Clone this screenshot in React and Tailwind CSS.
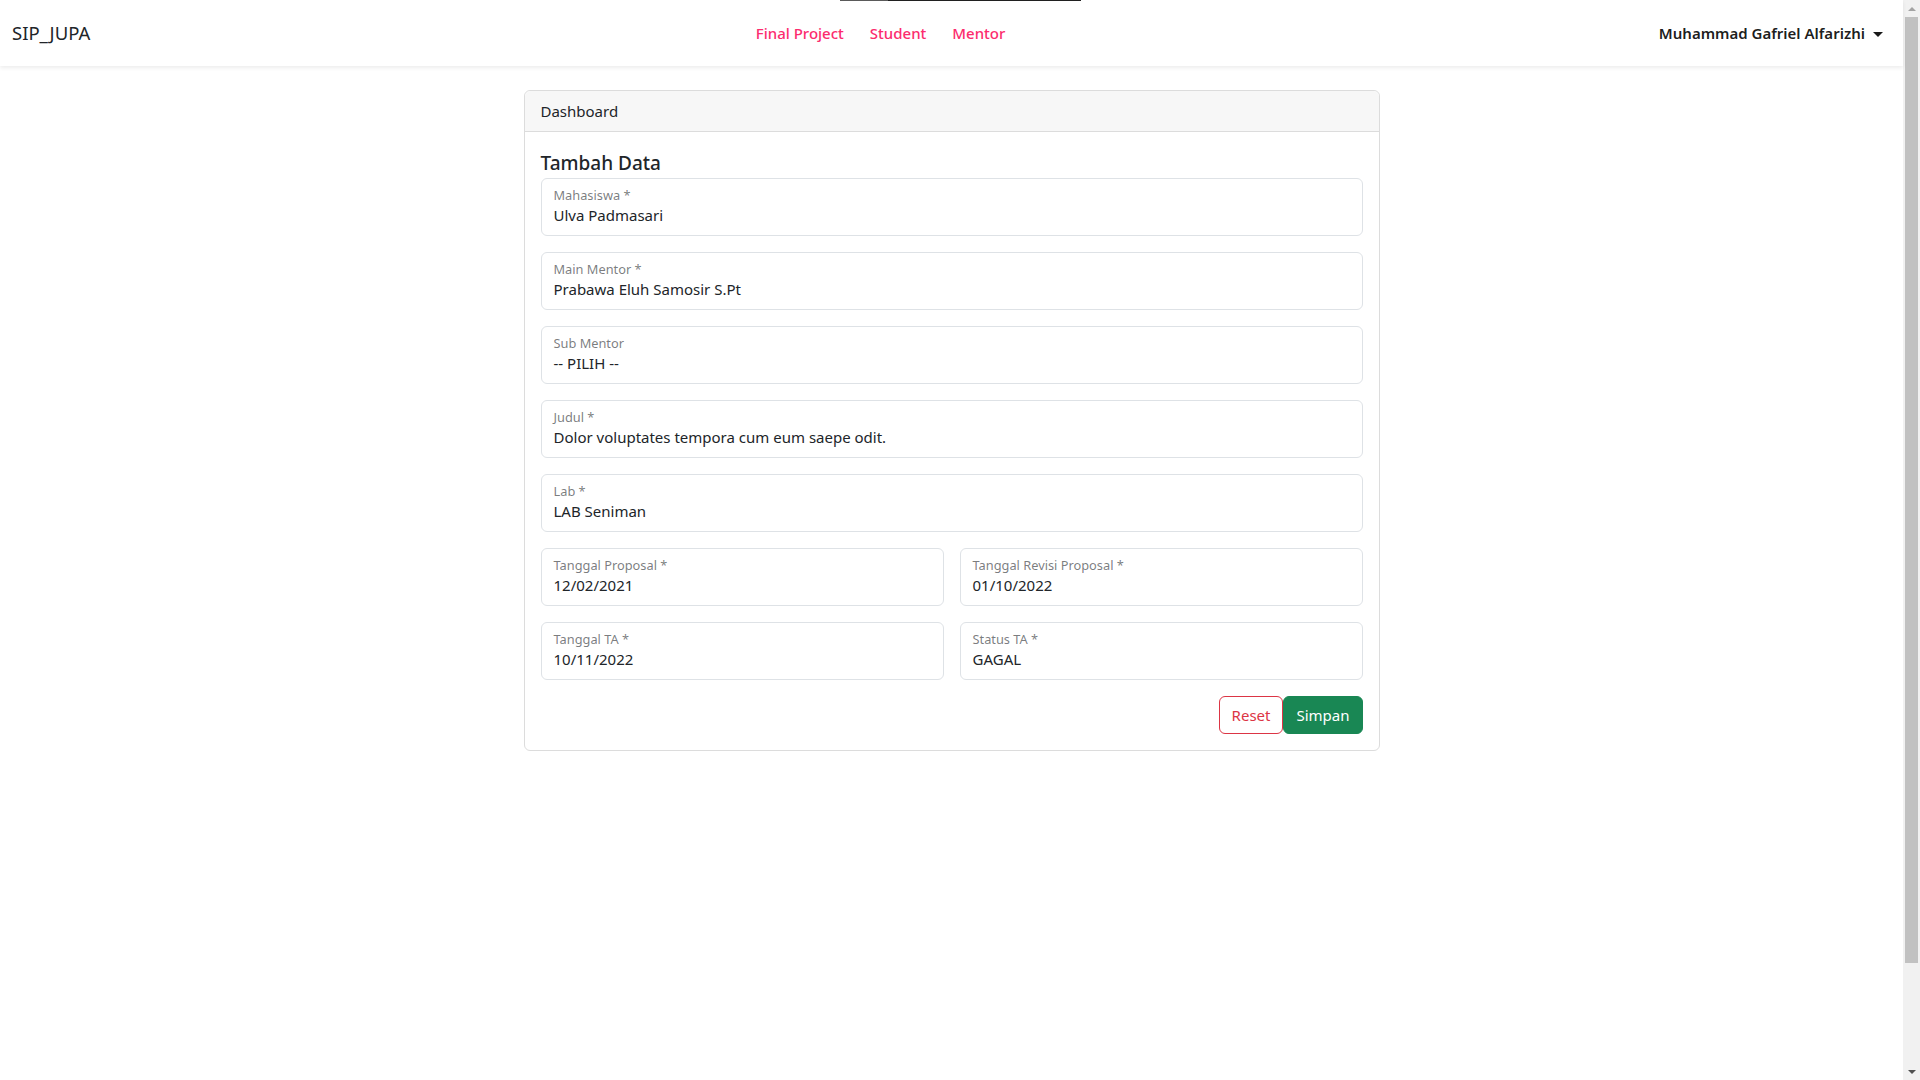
import React from 'react';

const font = { fontFamily: '"Noto Sans", "Open Sans", "Liberation Sans", sans-serif' };

function Field({ label, value }) {
  return (
    <div className="flex flex-col rounded-[6px] border border-[#dee2e6] bg-white px-3 pt-[9px] pb-[8px]">
      <span className="text-[12.8px] leading-[15px] text-[#212529]/60">{label}</span>
      <span className="text-[15px] leading-6 text-[#212529]">{value}</span>
    </div>
  );
}

function Navbar() {
  const links = ['Final Project', 'Student', 'Mentor'];

  return (
    <nav className="relative flex h-[66px] shrink-0 items-center bg-white px-3 shadow-[0_2px_4px_rgba(0,0,0,0.075)]">
      {/* thin dark strip across the top */}
      <div className="absolute left-[840px] top-0 flex h-px w-[241px]">
        <div className="w-[48px] bg-[#5a5a5a]" />
        <div className="flex-1 bg-[#202020]" />
      </div>

      <a className="mr-4 text-[18.5px] leading-[30px] text-[#212529]">SIP_JUPA</a>

      <div className="mx-auto flex items-center gap-[10px] pr-[4px]">
        {links.map(link => (
          <a key={link} className="px-2 text-[15px] font-medium text-[#fc2c6e]">
            {link}
          </a>
        ))}
      </div>

      <div className="flex items-center pr-2 text-[15px] font-semibold text-black/90">
        <span>Muhammad Gafriel Alfarizhi</span>
        <span className="ml-[8px] mt-[2px] h-0 w-0 border-x-[5px] border-t-[5px] border-x-transparent border-t-black/90" />
      </div>
    </nav>
  );
}

function Scrollbar() {
  return (
    <div className="flex h-full w-[17px] shrink-0 flex-col items-center bg-[#f1f1f1]">
      <div className="flex h-[17px] items-center justify-center">
        <span className="h-0 w-0 border-x-[4px] border-b-[4px] border-x-transparent border-b-[#a3a3a3]" />
      </div>
      <div className="w-[13px] flex-1">
        <div className="h-[946px] w-full bg-[#c1c1c1]" />
      </div>
      <div className="flex h-[17px] items-center justify-center">
        <span className="h-0 w-0 border-x-[4px] border-t-[4px] border-x-transparent border-t-[#505050]" />
      </div>
    </div>
  );
}

export default function App() {
  return (
    <div className="flex h-[1080px] overflow-hidden bg-white text-[#212529]" style={font}>
      <div className="flex min-w-0 flex-1 flex-col">
        <Navbar />

        <main className="mx-auto mt-6 w-[856px]">
          <div className="rounded-[6px] border border-[#dcdcdc] bg-white">
            <div className="rounded-t-[6px] border-b border-[#dcdcdc] bg-[#f7f7f7] px-4 py-2 text-[15px] leading-6">
              Dashboard
            </div>

            <div className="p-4">
              <h4 className="pt-px text-[19px] font-medium leading-[29px]">Tambah Data</h4>

              <div className="flex flex-col gap-4">
                <Field label="Mahasiswa *" value="Ulva Padmasari" />
                <Field label="Main Mentor *" value="Prabawa Eluh Samosir S.Pt" />
                <Field label="Sub Mentor" value="-- PILIH --" />
                <Field label="Judul *" value="Dolor voluptates tempora cum eum saepe odit." />
                <Field label="Lab *" value="LAB Seniman" />
                <div className="grid grid-cols-2 gap-4">
                  <Field label="Tanggal Proposal *" value="12/02/2021" />
                  <Field label="Tanggal Revisi Proposal *" value="01/10/2022" />
                </div>
                <div className="grid grid-cols-2 gap-4">
                  <Field label="Tanggal TA *" value="10/11/2022" />
                  <Field label="Status TA *" value="GAGAL" />
                </div>
              </div>

              <div className="mt-4 flex justify-end">
                <button className="h-[38px] rounded-[6px] border border-[#dc3545] px-3 text-[15px] text-[#dc3545]">
                  Reset
                </button>
                <button className="h-[38px] rounded-[6px] border border-[#198754] bg-[#198754] px-3 text-[15px] text-white">
                  Simpan
                </button>
              </div>
            </div>
          </div>
        </main>
      </div>

      <Scrollbar />
    </div>
  );
}
